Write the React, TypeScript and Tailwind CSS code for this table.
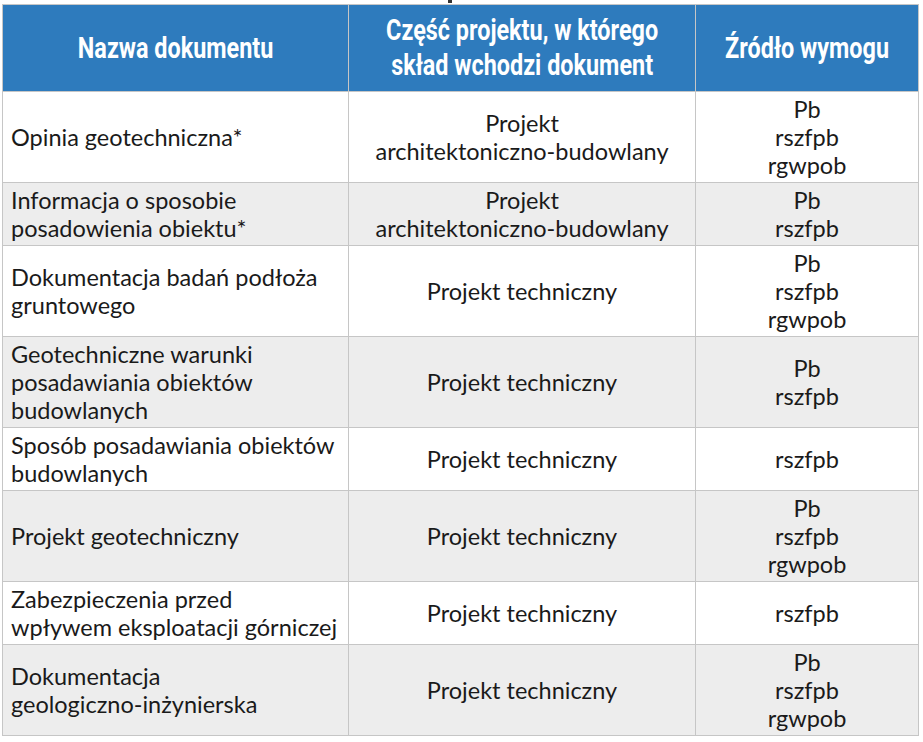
import React from "react";

const rows: { name: string[]; part: string[]; src: string[] }[] = [
  { name: ["Opinia geotechniczna*"], part: ["Projekt", "architektoniczno-budowlany"], src: ["Pb", "rszfpb", "rgwpob"] },
  { name: ["Informacja o sposobie", "posadowienia obiektu*"], part: ["Projekt", "architektoniczno-budowlany"], src: ["Pb", "rszfpb"] },
  { name: ["Dokumentacja badań podłoża", "gruntowego"], part: ["Projekt techniczny"], src: ["Pb", "rszfpb", "rgwpob"] },
  { name: ["Geotechniczne warunki", "posadawiania obiektów", "budowlanych"], part: ["Projekt techniczny"], src: ["Pb", "rszfpb"] },
  { name: ["Sposób posadawiania obiektów", "budowlanych"], part: ["Projekt techniczny"], src: ["rszfpb"] },
  { name: ["Projekt geotechniczny"], part: ["Projekt techniczny"], src: ["Pb", "rszfpb", "rgwpob"] },
  { name: ["Zabezpieczenia przed", "wpływem eksploatacji górniczej"], part: ["Projekt techniczny"], src: ["rszfpb"] },
  { name: ["Dokumentacja", "geologiczno-inżynierska"], part: ["Projekt techniczny"], src: ["Pb", "rszfpb", "rgwpob"] },
];

const head =
  "inline-block whitespace-nowrap scale-x-[0.9] scale-y-[1.12] font-['Roboto',sans-serif] font-bold text-white text-[26px] leading-[31px]";

const cell = "border border-[#c6c6c6] py-[3px] align-middle text-[23.5px] leading-[28px]";

export default function App() {
  return (
    <div className="w-[923px] h-[742px] bg-white font-['Lato','Noto_Sans',sans-serif] text-[#1a1a1a] overflow-hidden">
      <div className="h-[4px] flex">
        <div className="ml-[448px] w-[4px] h-[3px] bg-[#333]" />
      </div>
      <table className="ml-[2px] border-collapse table-fixed w-[916px]">
        <colgroup>
          <col className="w-[346px]" />
          <col className="w-[347px]" />
          <col className="w-[223px]" />
        </colgroup>
        <thead>
          <tr className="h-[87px] bg-[#2e7bbd]">
            <th className="border border-[#c6c6c6] text-center align-middle p-0">
              <span className={head}>Nazwa dokumentu</span>
            </th>
            <th className="border border-[#c6c6c6] text-center align-middle p-0">
              <span className={head}>
                Część projektu, w którego
                <br />
                skład wchodzi dokument
              </span>
            </th>
            <th className="border border-[#c6c6c6] text-center align-middle p-0">
              <span className={head}>Źródło wymogu</span>
            </th>
          </tr>
        </thead>
        <tbody>
          {rows.map((r, i) => (
            <tr key={i} className={i % 2 === 1 ? "bg-[#ededed]" : "bg-white"}>
              <td className={`${cell} pl-[8px] pr-0`}>
                {r.name.map((l, j) => (
                  <div key={j} className="whitespace-nowrap">{l}</div>
                ))}
              </td>
              <td className={`${cell} px-0 text-center`}>
                {r.part.map((l, j) => (
                  <div key={j}>{l}</div>
                ))}
              </td>
              <td className={`${cell} px-0 text-center`}>
                {r.src.map((l, j) => (
                  <div key={j}>{l}</div>
                ))}
              </td>
            </tr>
          ))}
        </tbody>
      </table>
    </div>
  );
}
